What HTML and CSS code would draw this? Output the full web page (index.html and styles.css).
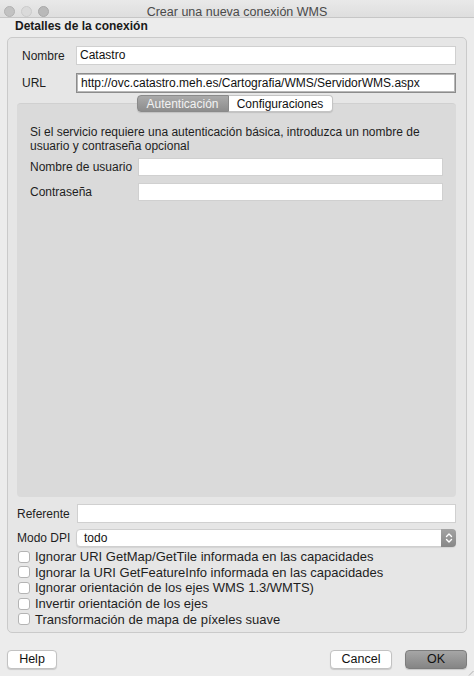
FILE: index.html
```html
<!DOCTYPE html>
<html lang="es">
<head>
<meta charset="utf-8">
<title>Crear una nueva conexión WMS</title>
<link rel="stylesheet" href="styles.css">
</head>
<body>
<div class="window">
  <div class="titlebar">
    <div class="lights">
      <span class="light l1"></span>
      <span class="light l2"></span>
      <span class="light l3"></span>
    </div>
    <div class="title">Crear una nueva conexión WMS</div>
    <div class="spacer"></div>
  </div>
  <div class="section-title">Detalles de la conexión</div>
  <div class="group">
    <div class="row row-nombre">
      <label class="lbl lbl-top">Nombre</label>
      <div class="input">Catastro</div>
    </div>
    <div class="row row-url">
      <label class="lbl lbl-top">URL</label>
      <div class="input input-focus">http://ovc.catastro.meh.es/Cartografia/WMS/ServidorWMS.aspx</div>
    </div>
    <div class="tabs">
      <div class="tab tab-active">Autenticación</div>
      <div class="tab">Configuraciones</div>
    </div>
    <div class="pane">
      <p class="info">Si el servicio requiere una autenticación básica, introduzca un nombre de usuario y contraseña opcional</p>
      <div class="prow prow-user">
        <label class="plbl">Nombre de usuario</label>
        <div class="input pinput"></div>
      </div>
      <div class="prow prow-pass">
        <label class="plbl">Contraseña</label>
        <div class="input pinput"></div>
      </div>
    </div>
    <div class="row row-ref">
      <label class="lbl">Referente</label>
      <div class="input input-ref"></div>
    </div>
    <div class="row row-dpi">
      <label class="lbl">Modo DPI</label>
      <div class="select">
        <span class="select-text">todo</span>
        <span class="select-btn">
          <svg width="8" height="12" viewBox="0 0 8 12"><path d="M1.5 4.5 L4 2 L6.5 4.5 M1.5 7.5 L4 10 L6.5 7.5" fill="none" stroke="#fff" stroke-width="1.4" stroke-linecap="round" stroke-linejoin="round"/></svg>
        </span>
      </div>
    </div>
    <div class="checks">
      <div class="check"><span class="box"></span><span>Ignorar URI GetMap/GetTile informada en las capacidades</span></div>
      <div class="check"><span class="box"></span><span>Ignorar la URI GetFeatureInfo informada en las capacidades</span></div>
      <div class="check"><span class="box"></span><span>Ignorar orientación de los ejes WMS 1.3/WMTS)</span></div>
      <div class="check"><span class="box"></span><span>Invertir orientación de los ejes</span></div>
      <div class="check"><span class="box"></span><span>Transformación de mapa de píxeles suave</span></div>
    </div>
  </div>
  <div class="footer">
    <div class="btn btn-help">Help</div>
    <div class="footer-right">
      <div class="btn btn-cancel">Cancel</div>
      <div class="btn btn-ok">OK</div>
    </div>
    <svg class="grip" width="6" height="6" viewBox="0 0 6 6"><path d="M5.5 1 L1 5.5" stroke="#b0b0b0" stroke-width="1"/></svg>
  </div>
</div>
</body>
</html>
```
FILE: styles.css
```css
* { box-sizing: border-box; }
html, body { margin: 0; padding: 0; }
body {
  font-family: "Liberation Sans", Arial, sans-serif;
  font-size: 12px;
  color: #1e1e1e;
  background: #ececec;
}
.window {
  width: 474px;
  height: 676px;
  background: #ececec;
  display: flex;
  flex-direction: column;
  overflow: hidden;
}
.titlebar {
  height: 18px;
  flex: none;
  display: flex;
  align-items: flex-start;
  background: linear-gradient(#e9e9e9, #dedede);
  border-bottom: 1px solid #c6c6c6;
}
.lights {
  width: 56px;
  display: flex;
  gap: 6px;
  padding-left: 4px;
  padding-top: 6px;
}
.light {
  width: 11px;
  height: 11px;
  border-radius: 50%;
  background: #c2c2c2;
  border: 1px solid #b2b2b2;
}
.light.l2 { background: #dadada; border-color: #cbcbcb; }
.light.l3 { background: #b9b9b9; border-color: #a9a9a9; }
.title {
  flex: 1;
  text-align: center;
  color: #4a4a4a;
  font-size: 12.5px;
  line-height: 14px;
  padding-top: 5px;
}
.spacer { width: 56px; }
.section-title {
  flex: none;
  height: 19px;
  padding: 1px 15px 0;
  font-weight: bold;
  font-size: 12px;
  line-height: 14px;
  color: #1a1a1a;
}
.group {
  flex: none;
  margin: 0 7px;
  height: 596px;
  border: 1px solid #cacaca;
  border-radius: 5px;
  background: #e6e6e6;
  padding: 8px 10px 0 9px;
  display: flex;
  flex-direction: column;
}
.row { display: flex; align-items: center; flex: none; }
.lbl { width: 59px; flex: none; color: #1e1e1e; white-space: nowrap; }
.lbl-top { padding-left: 5px; }
.input {
  flex: 1;
  background: #fff;
  border: 1px solid #d0d0d0;
  height: 19px;
  line-height: 17px;
  padding-left: 3px;
  color: #111;
  white-space: nowrap;
  overflow: hidden;
}
.row-url { margin-top: 8px; }
.input-focus {
  height: 20px;
  border: 1px solid #8c8c8c;
  box-shadow: inset 0 0 0 1px #b8b8b8;
  line-height: 18px;
  padding-left: 4px;
}
.tabs {
  flex: none;
  display: flex;
  justify-content: center;
  margin-top: 2px;
  position: relative;
  z-index: 1;
  padding-right: 4px;
}
.tab {
  height: 17px;
  line-height: 16px;
  background: #fff;
  border: 1px solid #c4c4c4;
  border-left: none;
  border-radius: 0 4px 4px 0;
  color: #111;
  box-shadow: 0 1px 1px rgba(0,0,0,0.12);
  width: 104px;
  text-align: center;
  white-space: nowrap;
}
.tab-active {
  width: 92px;
  background: linear-gradient(#aaaaaa, #8d8d8d);
  border: 1px solid #8a8a8a;
  border-radius: 4px 0 0 4px;
  color: #f2f2f2;
}
.pane {
  flex: none;
  margin-top: -9px;
  height: 394px;
  background: #dadada;
  border-radius: 4px;
  border-top: 1px solid #d0d0d0;
  padding: 21px 13px 0 13px;
}
.info {
  margin: 0;
  line-height: 14px;
  color: #1e1e1e;
}
.prow { display: flex; align-items: center; }
.prow-user { margin-top: 5px; }
.prow-pass { margin-top: 7px; }
.plbl { width: 108px; flex: none; white-space: nowrap; }
.pinput { height: 18px; }
.row-ref { margin-top: 7px; }
.input-ref { margin-left: 1px; }
.row-dpi { margin-top: 6px; }
.select {
  flex: 1;
  height: 18px;
  background: #fff;
  border: 1px solid #cfcfcf;
  border-radius: 4px;
  display: flex;
  align-items: center;
  justify-content: space-between;
  box-shadow: 0 1px 1px rgba(0,0,0,0.08);
}
.select-text { padding-left: 7px; color: #111; }
.select-btn {
  width: 15px;
  height: 18px;
  margin-right: -1px;
  border-radius: 0 4px 4px 0;
  background: linear-gradient(#a3a3a3, #878787);
  display: flex;
  align-items: center;
  justify-content: center;
}
.checks { margin-top: 2px; display: flex; flex-direction: column; }
.check {
  height: 15.6px;
  display: flex;
  align-items: center;
  gap: 5px;
  padding-left: 1px;
  font-size: 13px;
  color: #1e1e1e;
  white-space: nowrap;
}
.box {
  width: 12px;
  height: 12px;
  flex: none;
  background: #fff;
  border: 1px solid #b4b4b4;
  border-radius: 3px;
}
.footer {
  flex: 1;
  display: flex;
  justify-content: space-between;
  padding: 17px 7px 0 7px;
  position: relative;
}
.footer-right { display: flex; gap: 13px; }
.btn {
  height: 19px;
  line-height: 17px;
  text-align: center;
  background: #fff;
  border: 1px solid #c2c2c2;
  border-radius: 4px;
  box-shadow: 0 1px 1px rgba(0,0,0,0.15);
  color: #111;
  font-size: 12.5px;
}
.btn-help { width: 50px; }
.btn-cancel { width: 62px; }
.btn-ok {
  width: 62px;
  background: linear-gradient(#a6a6a6, #858585);
  border-color: #7d7d7d;
  color: #111;
}
.grip {
  position: absolute;
  right: 0;
  bottom: 0;
}
```
